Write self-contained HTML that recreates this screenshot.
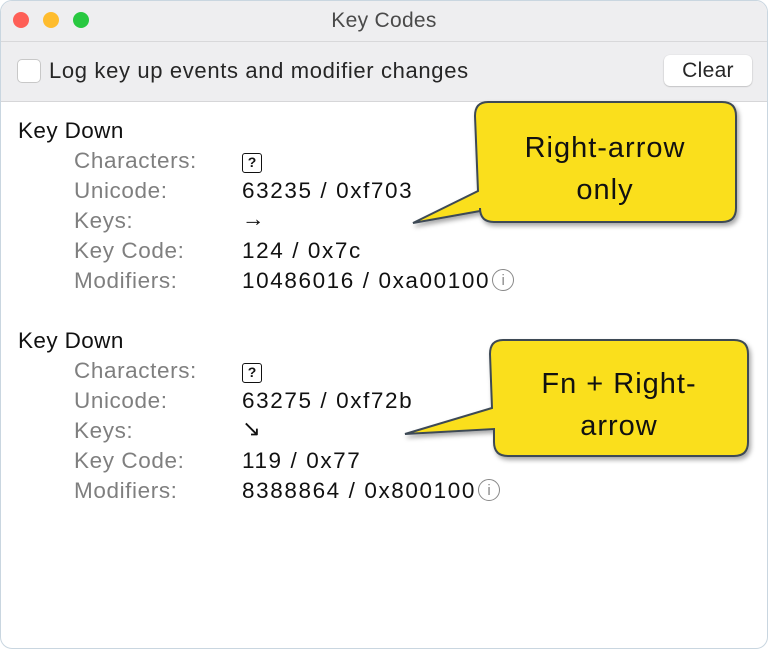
<!DOCTYPE html>
<html><head><meta charset="utf-8"><style>
body{margin:0;width:770px;height:650px;background:#fff;overflow:hidden;font-family:"Liberation Sans",sans-serif;}
.win{position:absolute;left:0;top:0;width:766px;height:647px;border:1px solid #c9d6e0;border-radius:12px;overflow:hidden;background:#fff;}
.tb{position:absolute;left:0;top:0;width:766px;height:100px;background:#eeeef0;border-bottom:1px solid #d6d6d8;}
.tl{position:absolute;top:11px;width:16px;height:16px;border-radius:50%;}
.title{position:absolute;top:8px;left:0;width:766px;text-align:center;font-size:21px;letter-spacing:0.3px;color:#4a4a4a;}
.sep{position:absolute;top:40px;left:0;width:766px;height:1px;background:#d8d8da;}
.cb{position:absolute;left:16px;top:58px;width:22px;height:22px;border:1px solid #c8c8c8;border-radius:5px;background:#fff;}
.lbl{position:absolute;left:48px;top:57px;font-size:22px;letter-spacing:0.65px;color:#262626;}
.btn{position:absolute;left:663px;top:54px;width:88px;height:31px;background:#fff;border-radius:6px;box-shadow:0 0.5px 1.5px rgba(0,0,0,.3);font-size:21px;letter-spacing:0.3px;color:#262626;text-align:center;line-height:31px;}
.t{position:absolute;font-size:22.5px;white-space:nowrap;line-height:24px;}
.k{color:#7f7f7f;left:73px;letter-spacing:0.6px;}
.v{color:#111;left:241px;letter-spacing:1.6px;}
.h{color:#111;left:17px;letter-spacing:0.4px;}
.q{display:inline-block;width:20px;height:20px;border:1.6px solid #111;border-radius:3px;font-size:14px;line-height:17px;text-align:center;font-weight:bold;vertical-align:1px;box-sizing:border-box;letter-spacing:0;}
.i{display:inline-block;width:22px;height:22px;border:1.3px solid #888;border-radius:50%;color:#888;font-size:15px;line-height:21px;text-align:center;box-sizing:border-box;vertical-align:3px;margin-left:2px;letter-spacing:0;}
</style></head><body>
<div class="win">
<div class="tb">
<div class="tl" style="left:12px;background:#fe5f57;"></div>
<div class="tl" style="left:42px;background:#febc2e;"></div>
<div class="tl" style="left:72px;background:#28c840;"></div>
<div class="title">Key Codes</div>
<div class="sep"></div>
<div class="cb"></div>
<div class="lbl">Log key up events and modifier changes</div>
<div class="btn">Clear</div>
</div>

<div class="t h" style="top:118px">Key Down</div>
<div class="t k" style="top:148px">Characters:</div>
<div class="t k" style="top:178px">Unicode:</div>
<div class="t k" style="top:208px">Keys:</div>
<div class="t k" style="top:238px">Key Code:</div>
<div class="t k" style="top:268px">Modifiers:</div>
<div class="t v" style="top:148px"><span class="q">?</span></div>
<div class="t v" style="top:178px">63235 / 0xf703</div>
<div class="t v" style="top:206px">→</div>
<div class="t v" style="top:238px">124 / 0x7c</div>
<div class="t v" style="top:268px">10486016 / 0xa00100<span class="i">i</span></div>

<div class="t h" style="top:328px">Key Down</div>
<div class="t k" style="top:358px">Characters:</div>
<div class="t k" style="top:388px">Unicode:</div>
<div class="t k" style="top:418px">Keys:</div>
<div class="t k" style="top:448px">Key Code:</div>
<div class="t k" style="top:478px">Modifiers:</div>
<div class="t v" style="top:358px"><span class="q">?</span></div>
<div class="t v" style="top:388px">63275 / 0xf72b</div>
<div class="t v" style="top:416px">↘</div>
<div class="t v" style="top:448px">119 / 0x77</div>
<div class="t v" style="top:478px">8388864 / 0x800100<span class="i">i</span></div>
</div>

<svg width="770" height="650" style="position:absolute;left:0;top:0">
<defs><filter id="s" x="-10%" y="-10%" width="130%" height="140%"><feDropShadow dx="2" dy="3" stdDeviation="2.5" flood-color="#000" flood-opacity="0.35"/></filter></defs>
<path filter="url(#s)" d="M488,102 H722 Q736,102 736,116 V208 Q736,222 722,222 H494 Q480,222 480,208 V211 L413,223 L478,191 L475,116 Q475,102 488,102 Z" fill="#fadf1c" stroke="#3e4a55" stroke-width="2"/>
<text x="605" y="157" text-anchor="middle" font-family="Liberation Sans, sans-serif" font-size="29" letter-spacing="1" fill="#111">Right-arrow</text>
<text x="605" y="199" text-anchor="middle" font-family="Liberation Sans, sans-serif" font-size="29" letter-spacing="1" fill="#111">only</text>
<path filter="url(#s)" d="M503,340 H734 Q748,340 748,354 V442 Q748,456 734,456 H508 Q494,456 494,442 V429 L405,434 L492,408 L490,354 Q490,340 503,340 Z" fill="#fadf1c" stroke="#3e4a55" stroke-width="2"/>
<text x="619" y="393" text-anchor="middle" font-family="Liberation Sans, sans-serif" font-size="29" letter-spacing="1" fill="#111">Fn + Right-</text>
<text x="619" y="435" text-anchor="middle" font-family="Liberation Sans, sans-serif" font-size="29" letter-spacing="1" fill="#111">arrow</text>
</svg>
</body></html>
